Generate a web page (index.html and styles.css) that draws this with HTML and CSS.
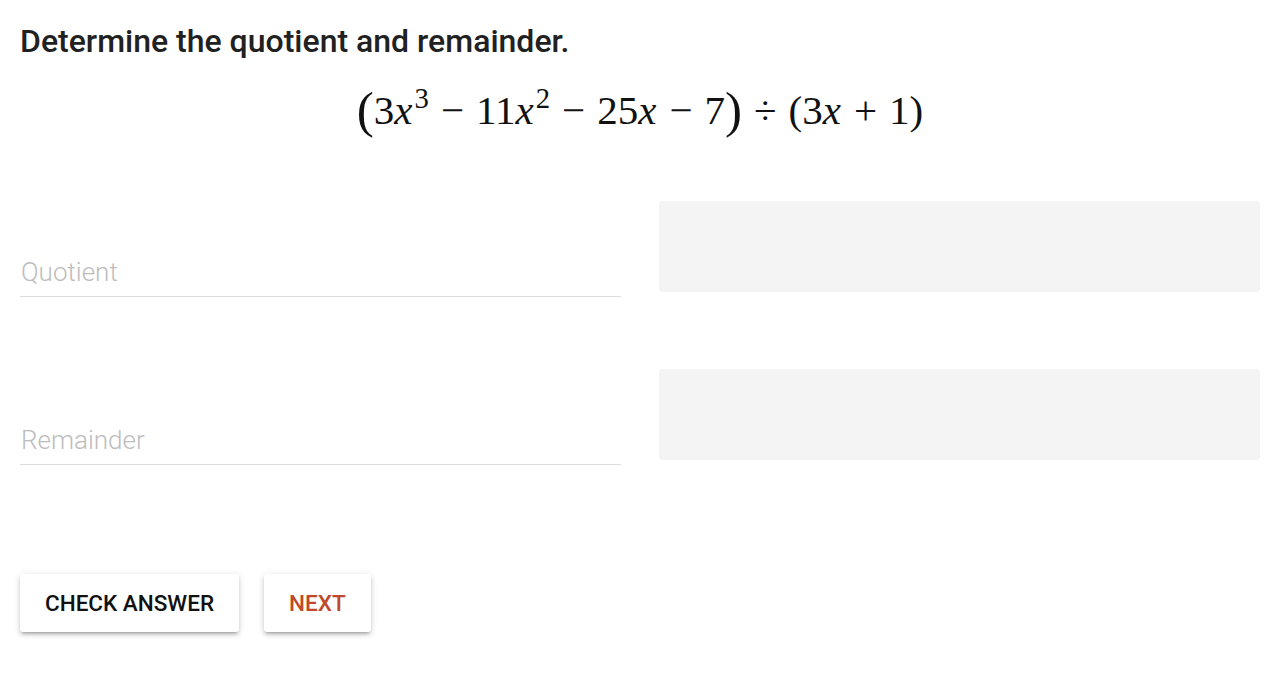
FILE: index.html
```html
<!DOCTYPE html>
<html lang="en">
<head>
  <meta charset="UTF-8">
  <title>Polynomial division</title>
  <meta name="viewport" content="width=device-width, initial-scale=1.0" />
  <link rel="stylesheet" href="styles.css">
</head>
<body>
  <div class="exercice">
    <h1 class="consigne">Determine the quotient and remainder.</h1>

    <div class="formule"><span class="paren big">(</span>3<i>x</i><sup>3</sup><span class="op">−</span>11<i>x</i><sup>2</sup><span class="op">−</span>25<i>x</i><span class="op">−</span>7<span class="paren big">)</span><span class="op">÷</span>(3<i>x</i><span class="op">+</span>1)</div>

    <div class="ligne">
      <div class="champ">
        <input type="text" placeholder="Quotient">
      </div>
      <div class="apercu"></div>
    </div>

    <div class="ligne">
      <div class="champ">
        <input type="text" placeholder="Remainder">
      </div>
      <div class="apercu"></div>
    </div>

    <div class="actions">
      <button class="btn">Check answer</button>
      <button class="btn suivant">Next</button>
    </div>
  </div>
</body>
</html>
```

FILE: styles.css
```css
body {
  margin: 0;
  background: #fff;
  color: #212121;
  font-family: Roboto, "Liberation Sans", sans-serif;
}

.exercice {
  padding: 20px 14px 20px 20px;
}

.consigne {
  margin: 2px 0 0;
  font-size: 32px;
  font-weight: 500;
  line-height: 38px;
}

.formule {
  margin-top: 22px;
  height: 57px;
  text-align: center;
  font-family: "Liberation Serif", serif;
  font-size: 41px;
  line-height: 56px;
  color: #111;
}

.formule i {
  font-style: italic;
  margin-right: 1px;
}

.formule sup {
  font-size: 0.7em;
  vertical-align: 0.55em;
  line-height: 0;
  margin-left: 1px;
}

.formule .op {
  margin: 0 12px;
}

.formule .paren.big {
  font-size: 1.25em;
  vertical-align: -3px;
}

.ligne {
  display: grid;
  grid-template-columns: 1fr 1fr;
  column-gap: 38px;
  height: 96px;
  margin-top: 62px;
}

.ligne + .ligne {
  margin-top: 72px;
}

.champ {
  display: flex;
  align-items: flex-end;
}

.champ input {
  width: 100%;
  border: none;
  border-bottom: 1px solid #dcdcdc;
  padding: 0 0 9px 1px;
  font-family: Roboto, sans-serif;
  font-size: 26px;
  font-weight: 300;
  color: #212121;
  outline: none;
  background: transparent;
}

.champ input::placeholder {
  color: #bdbdbd;
}

.apercu {
  height: 91px;
  background: #f4f4f4;
  border-radius: 4px;
}

.actions {
  display: flex;
  gap: 25px;
  margin-top: 109px;
}

.btn {
  height: 58px;
  padding: 0 25px;
  border: none;
  border-radius: 3px;
  background: #fff;
  font-family: Roboto, sans-serif;
  font-size: 22.5px;
  font-weight: 500;
  color: #111;
  text-transform: uppercase;
  box-shadow: 0 3px 3px -2px rgba(0,0,0,0.25), 0 3px 4px 0 rgba(0,0,0,0.14), 0 1px 8px 0 rgba(0,0,0,0.1);
}

.btn.suivant {
  color: #c0492b;
}
```
